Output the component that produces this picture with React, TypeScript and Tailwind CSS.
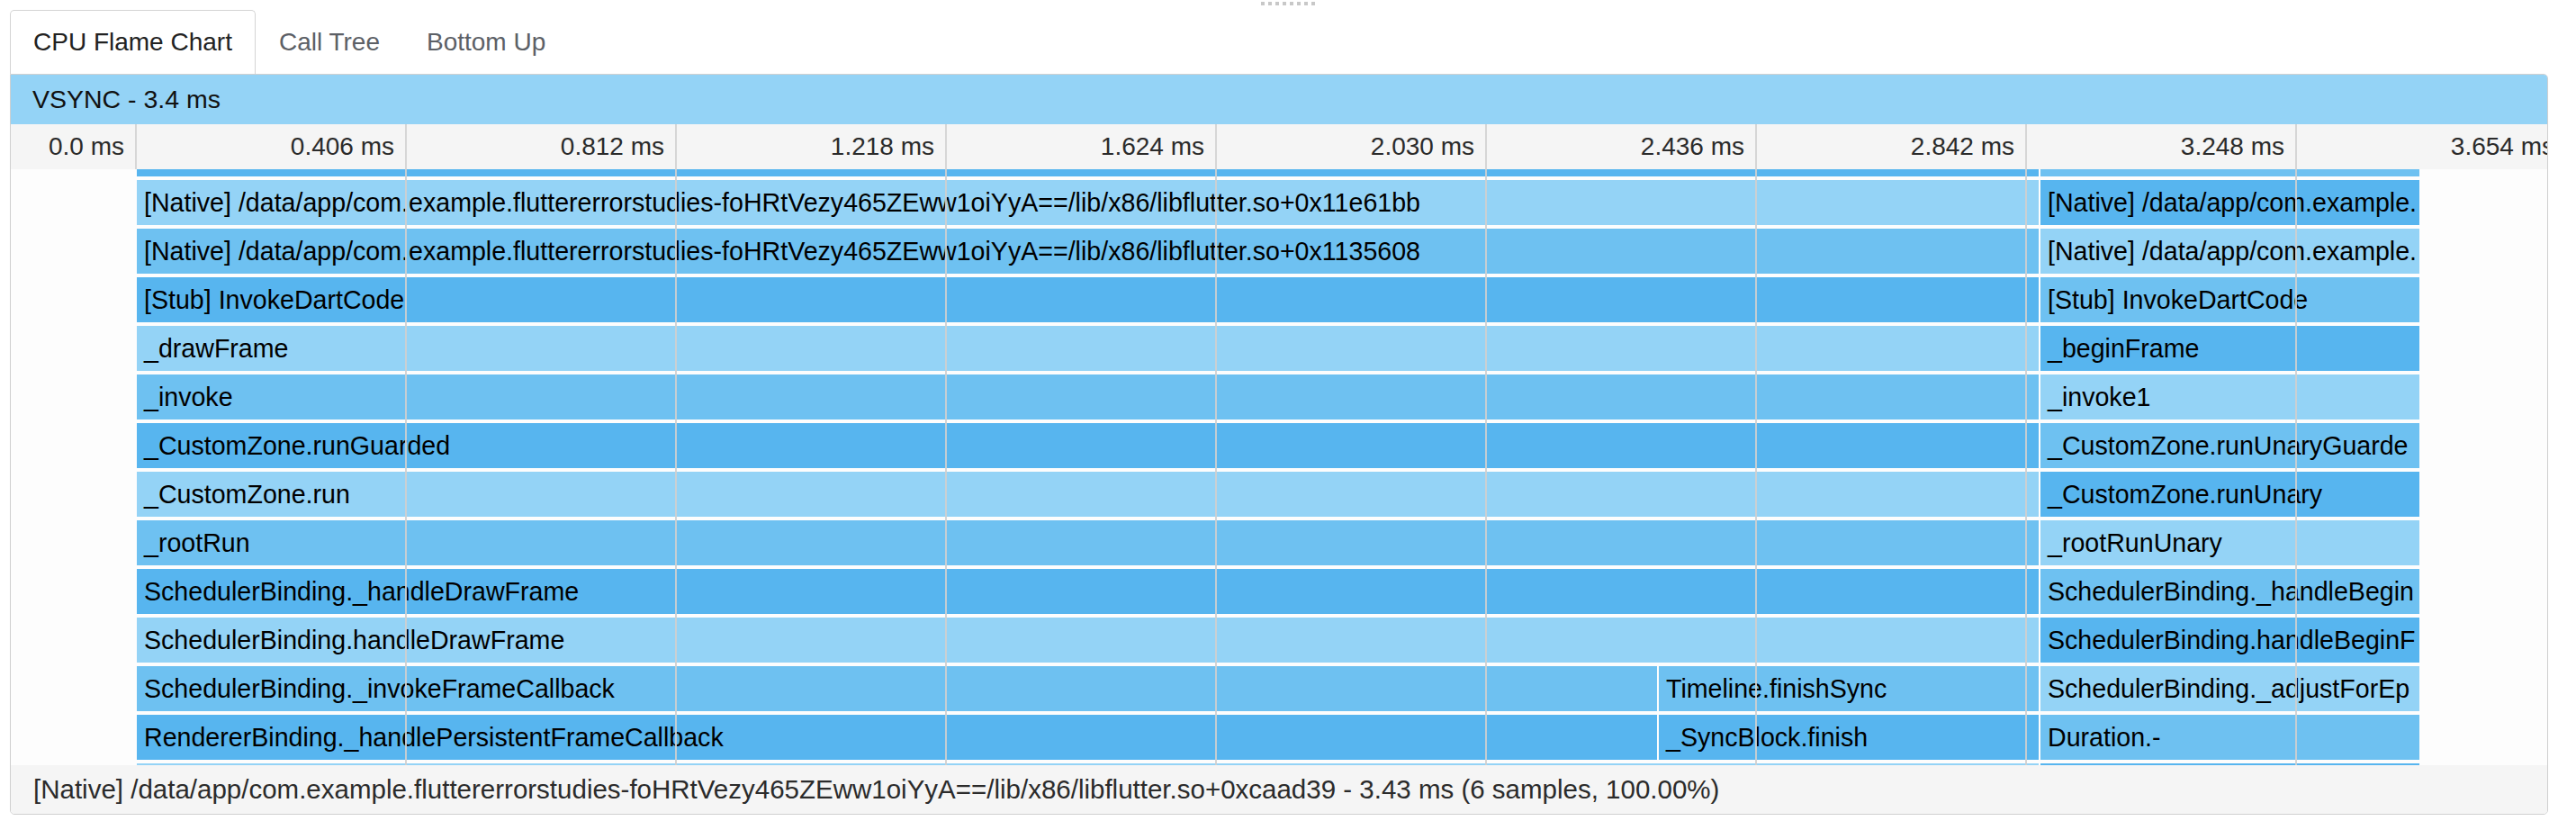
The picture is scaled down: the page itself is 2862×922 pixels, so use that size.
import * as React from 'react';

const BAR = ['bg-[#57b5ef]', 'bg-[#94d3f6]', 'bg-[#6ec1f1]'];
const RIGHT = ['bg-[#6ec1f1]', 'bg-[#57b5ef]', 'bg-[#94d3f6]'];

const LIB = '[Native] /data/app/com.example.fluttererrorstudies-foHRtVezy465ZEww1oiYyA==/lib/x86/libflutter.so';

interface IRow {
  left: string;
  mid?: string;
  right: string;
}

const rows: IRow[] = [
  { left: '', right: '' },
  { left: `${LIB}+0x11e61bb`, right: '[Native] /data/app/com.example.' },
  { left: `${LIB}+0x1135608`, right: '[Native] /data/app/com.example.' },
  { left: '[Stub] InvokeDartCode', right: '[Stub] InvokeDartCode' },
  { left: '_drawFrame', right: '_beginFrame' },
  { left: '_invoke', right: '_invoke1' },
  { left: '_CustomZone.runGuarded', right: '_CustomZone.runUnaryGuarde' },
  { left: '_CustomZone.run', right: '_CustomZone.runUnary' },
  { left: '_rootRun', right: '_rootRunUnary' },
  { left: 'SchedulerBinding._handleDrawFrame', right: 'SchedulerBinding._handleBegin' },
  { left: 'SchedulerBinding.handleDrawFrame', right: 'SchedulerBinding.handleBeginF' },
  { left: 'SchedulerBinding._invokeFrameCallback', mid: 'Timeline.finishSync', right: 'SchedulerBinding._adjustForEp' },
  { left: 'RendererBinding._handlePersistentFrameCallback', mid: '_SyncBlock.finish', right: 'Duration.-' },
  { left: '', right: '' },
];

const ticks = ['0.406 ms', '0.812 ms', '1.218 ms', '1.624 ms', '2.030 ms', '2.436 ms', '2.842 ms', '3.248 ms', '3.654 ms'];

const Bar = ({ label, cls, w }: { label: string; cls: string; w: string }) => (
  <div className={`${cls} ${w} h-full shrink-0 overflow-hidden whitespace-nowrap pl-[8px] flex items-center text-black text-[28.6px]`}>
    {label}
  </div>
);

export default function App() {
  return (
    <div className="w-[2862px] h-[922px] bg-white overflow-hidden text-[28px] leading-none" style={{ fontFamily: '"Liberation Sans", Arial, sans-serif' }}>
      {/* resize handle */}
      <div className="h-[11px] flex justify-center items-start pt-[2px] gap-[4px]">
        {Array.from({ length: 8 }).map((_, i) => (
          <span key={i} className="w-[4px] h-[4px] bg-[#c8c8c8]" />
        ))}
      </div>

      {/* tabs */}
      <div className="flex pl-[11px] h-[71px]">
        <div className="h-full px-[25px] flex items-center border border-b-0 border-[#d4d4d4] rounded-t-[5px] bg-white text-[#222]">CPU Flame Chart</div>
        <div className="h-full px-[26px] flex items-center text-[#5c6066]">Call Tree</div>
        <div className="h-full px-[26px] flex items-center text-[#5c6066]">Bottom Up</div>
      </div>

      {/* panel */}
      <div className="ml-[11px] w-[2820px] h-[823px] border border-[#d0d0d0] rounded-[5px] rounded-tl-none overflow-hidden flex flex-col">
        <div className="h-[55px] shrink-0 bg-[#94d3f6] pl-[24px] flex items-center text-[#111] text-[28.5px]">VSYNC - 3.4 ms</div>

        <div className="h-[50px] shrink-0 bg-[#f5f5f5] flex text-[#2b2b2b] overflow-hidden">
          <div className="w-[140px] shrink-0 border-r-2 border-[#d6d6d6] flex items-center justify-end pr-[12px]">0.0 ms</div>
          {ticks.map((t) => (
            <div key={t} className="w-[300px] shrink-0 border-r-2 border-[#d6d6d6] flex items-center justify-end pr-[12px] whitespace-nowrap">
              {t}
            </div>
          ))}
        </div>

        <div className="relative h-[662px] shrink-0 bg-[#fdfdfd] overflow-hidden">
          <div className="flex flex-col gap-[4px]">
            {rows.map((r, i) => (
              <div key={i} className={`flex gap-[2px] pl-[140px] ${i === 0 ? 'h-[8px]' : i === rows.length - 1 ? 'h-[2px]' : 'h-[50px]'}`}>
                {r.mid ? (
                  <>
                    <Bar label={r.left} cls={BAR[i % 3]} w="w-[1689px]" />
                    <Bar label={r.mid} cls={BAR[i % 3]} w="w-[422px]" />
                  </>
                ) : (
                  <Bar label={r.left} cls={BAR[i % 3]} w="w-[2113px]" />
                )}
                <Bar label={r.right} cls={RIGHT[i % 3]} w="w-[421px]" />
              </div>
            ))}
          </div>
          {/* grid lines over the chart */}
          <div className="absolute inset-0 flex pointer-events-none">
            <div className="w-[140px] shrink-0" />
            {ticks.map((t) => (
              <div key={t} className="w-[300px] shrink-0 border-r-2 border-[#cfcfcf]/90" />
            ))}
          </div>
        </div>

        <div className="flex-1 bg-[#f5f5f5] pl-[25px] flex items-center text-[#2b2b2b] text-[29.5px] whitespace-nowrap">
          {`${LIB}+0xcaad39 - 3.43 ms (6 samples, 100.00%)`}
        </div>
      </div>
    </div>
  );
}
